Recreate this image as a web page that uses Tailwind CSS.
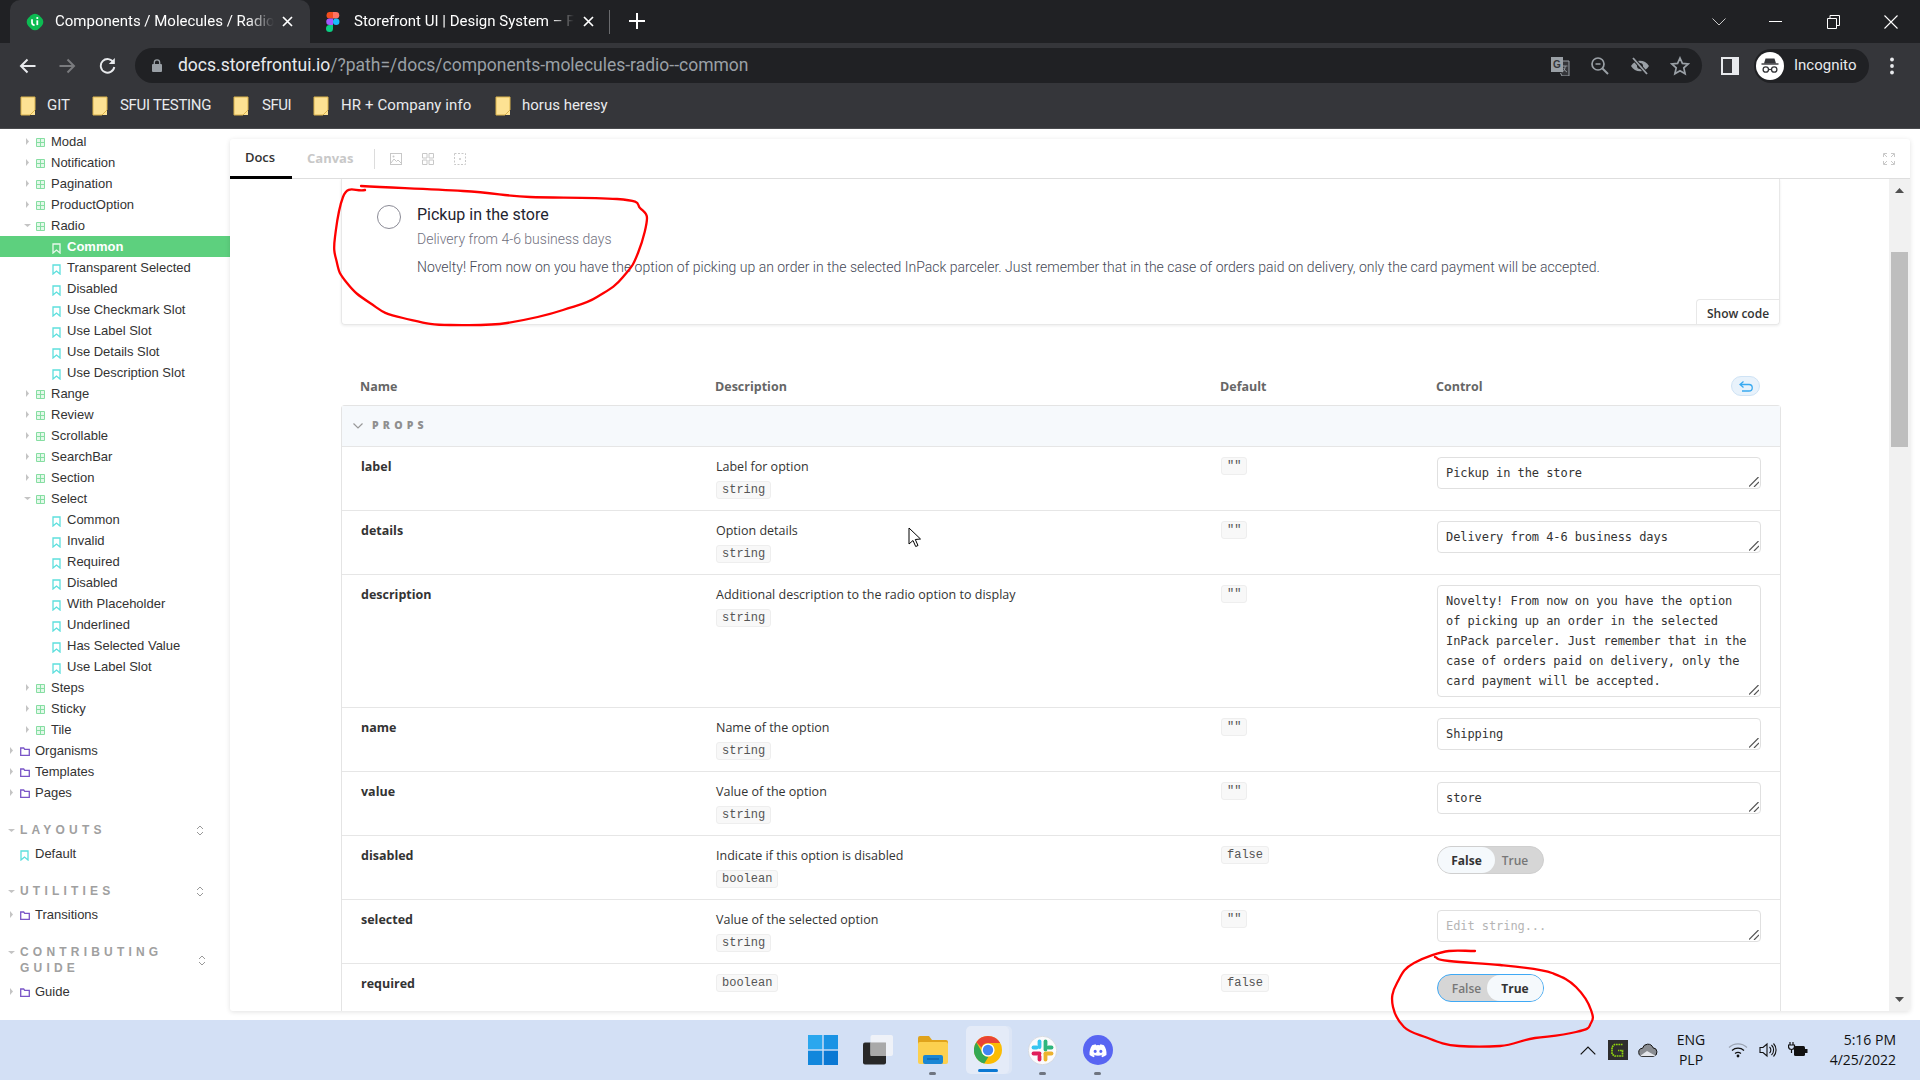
<!DOCTYPE html>
<html lang="en">
<head>
<meta charset="utf-8">
<title>Storefront UI docs</title>
<script src="https://cdn.jsdelivr.net/npm/@tailwindcss/browser@4"></script>
</head>
<body class="m-0 bg-white">
<svg class="hidden" width="0" height="0">
  <symbol id="g" viewBox="0 0 9 9"><path d="M.5.500h8v8h-8zM4.500.5v8M.5 4.500h8" fill="#e4f8ea" stroke="#86dea2" stroke-width="1"/></symbol>
  <symbol id="b" viewBox="0 0 9 11"><path d="M1 1h7v9L4.500 7 1 10z" fill="none" stroke="#5ddfdd" stroke-width="1.300"/></symbol>
  <symbol id="bw" viewBox="0 0 9 11"><path d="M1 1h7v9L4.500 7 1 10z" fill="none" stroke="#e8f8ec" stroke-width="1.300"/></symbol>
  <symbol id="f" viewBox="0 0 10 9"><path d="M.7 1h3l1 1.300h4.600v6H.7z" fill="none" stroke="#7a55c7" stroke-width="1.300"/></symbol>
  <symbol id="c" viewBox="0 0 5 7"><path d="M1 0l3 3.500L1 7z" fill="#c4c4c4"/></symbol>
  <symbol id="d" viewBox="0 0 7 5"><path d="M0 1h7L3.500 4z" fill="#c4c4c4"/></symbol>
  <symbol id="fol" viewBox="0 0 16 20"><path d="M1 1h14v18H1z" fill="#fde293"/><path d="M1 1h14v13l-5 5H1z" fill="#fde293" stroke="#d9b24c" stroke-width="1"/></symbol>
  <symbol id="grip" viewBox="0 0 10 10"><path d="M0 9.500L9.500 0M5 10L10 5" stroke="#555" stroke-width="1.200" fill="none"/></symbol>
  <symbol id="ud" viewBox="0 0 8 11"><path d="M1 4l3-3 3 3M1 7l3 3 3-3" stroke="#999" stroke-width="1" fill="none"/></symbol>
</svg>

<div class="flex h-[1080px] w-[1920px] flex-col overflow-hidden font-['Roboto',sans-serif]">

  <!-- tab strip -->
  <div class="flex h-[43px] shrink-0 bg-[#202124] text-white">
    <div class="ml-[10px] flex h-[43px] w-[300px] items-center rounded-t-[10px] bg-[#35363a] pl-[15px]">
      <svg width="20" height="20" viewBox="0 0 20 20"><rect x="2.500" y="2.500" width="15" height="15" rx="5.500" fill="#0cbb52" transform="rotate(45 10 10)"/><path d="M7 7.300v3.200a2.600 2.600 0 0 0 2.600 2.600" stroke="#fff" stroke-width="1.700" fill="none"/><path d="M12.300 8.300v4.800" stroke="#fff" stroke-width="1.800"/><circle cx="12.300" cy="6" r="1.100" fill="#fff"/></svg>
      <span class="ml-[10px] w-[219px] overflow-hidden whitespace-nowrap text-[15px] [mask-image:linear-gradient(to_right,black_88%,transparent)]">Components / Molecules / Radio</span>
      <svg class="ml-[8px]" width="11" height="11" viewBox="0 0 11 11"><path d="M1 1l9 9M10 1l-9 9" stroke="#fff" stroke-width="1.700"/></svg>
    </div>
    <div class="flex h-[43px] w-[299px] items-center pl-[16px]">
      <svg width="14" height="20" viewBox="0 0 14 20"><path d="M4 0h3v6.500H3.500a3.250 3.250 0 0 1 .5-6.500z" fill="#f24e1e"/><path d="M7 0h3a3.250 3.250 0 0 1 0 6.500H7z" fill="#ff7262"/><path d="M3.500 6.500H7V13H3.500a3.250 3.250 0 0 1 0-6.500z" fill="#a259ff"/><circle cx="10.200" cy="9.750" r="3.250" fill="#1abcfe"/><path d="M3.500 13H7v3.500a3.500 3.500 0 1 1-3.500-3.500z" fill="#0acf83"/></svg>
      <span class="ml-[14px] w-[220px] overflow-hidden whitespace-nowrap text-[15px] [mask-image:linear-gradient(to_right,black_90%,transparent)]">Storefront UI | Design System – Figma</span>
      <svg class="ml-[9px]" width="11" height="11" viewBox="0 0 11 11"><path d="M1 1l9 9M10 1l-9 9" stroke="#fff" stroke-width="1.700"/></svg>
    </div>
    <div class="mt-[10px] h-[24px] w-px bg-[#6a6b6e]"></div>
    <svg class="ml-[19px] mt-[13px]" width="16" height="16" viewBox="0 0 16 16"><path d="M8 0v16M0 8h16" stroke="#fff" stroke-width="2"/></svg>
    <div class="ml-auto flex h-[43px] items-center">
      <svg width="14" height="8" viewBox="0 0 14 8" class="mr-[43px]"><path d="M.5.500L7 7 13.500.5" stroke="#c8c8c8" stroke-width="1" fill="none"/></svg>
      <div class="mr-[45px] h-px w-[13px] bg-white"></div>
      <svg width="13" height="14" viewBox="0 0 13 14" class="mr-[44px]"><path d="M.5 3.500h9v10h-9zM3 3.500V.5h9.500v10H9.500" stroke="#fff" stroke-width="1" fill="none"/></svg>
      <svg width="14" height="14" viewBox="0 0 14 14" class="mr-[22px]"><path d="M.5.500l13 13M13.500.5l-13 13" stroke="#fff" stroke-width="1.100"/></svg>
    </div>
  </div>

  <!-- toolbar -->
  <div class="flex h-[43px] shrink-0 items-center bg-[#35363a] pt-[2px] text-white">
    <svg class="ml-[19px]" width="17" height="16" viewBox="0 0 17 16"><path d="M16.500 8H2M8.500 1.500L2 8l6.500 6.500" stroke="#e8eaed" stroke-width="2" fill="none"/></svg>
    <svg class="ml-[23px]" width="17" height="16" viewBox="0 0 17 16"><path d="M.5 8H15M8.500 1.500L15 8l-6.500 6.500" stroke="#7a7b7e" stroke-width="2" fill="none"/></svg>
    <svg class="ml-[23px]" width="17" height="17" viewBox="0 0 17 17"><path d="M14.500 5.500A6.800 6.800 0 1 0 15.300 10" stroke="#e8eaed" stroke-width="1.900" fill="none"/><path d="M15.800 1v6h-6z" fill="#e8eaed"/></svg>
    <div class="ml-[19px] flex h-[35px] w-[1567px] items-center rounded-full bg-[#202124] pl-[17px]">
      <svg width="10" height="13" viewBox="0 0 10 13"><rect y="5" width="10" height="8" rx="1" fill="#9aa0a6"/><path d="M2.300 5.500V3.500a2.700 2.700 0 0 1 5.400 0v2" stroke="#9aa0a6" stroke-width="1.300" fill="none"/></svg>
      <span class="ml-[16px] whitespace-nowrap text-[17.500px] leading-none"><span class="text-[#e8eaed]">docs.storefrontui.io</span><span class="text-[#9aa0a6]">/?path=/docs/components-molecules-radio--common</span></span>
      <div class="ml-auto mr-[12px] flex items-center gap-[20px]">
        <svg width="20" height="20" viewBox="0 0 20 20"><path d="M9 5h10v15h-7l-1.500-3" fill="#35363a" stroke="#9aa0a6" stroke-width="1"/><rect x="1" y="1" width="12" height="15" fill="#9aa0a6"/><text x="3" y="12" font-size="10" font-weight="700" font-family="Liberation Sans" fill="#35363a">G</text><path d="M13 10h4.500M15.200 10c0 3-1.300 5-2.700 6M13.800 12c.5 2 1.700 3 3.200 4" stroke="#9aa0a6" stroke-width=".9" fill="none"/></svg>
        <svg width="20" height="20" viewBox="0 0 20 20"><circle cx="8" cy="8" r="6" fill="none" stroke="#9aa0a6" stroke-width="1.700"/><path d="M12.500 12.500L18 18" stroke="#9aa0a6" stroke-width="2"/><path d="M5.500 8h5" stroke="#9aa0a6" stroke-width="1.500"/></svg>
        <svg width="20" height="20" viewBox="0 0 20 20"><path d="M1 10c4-7 14-7 18 0-4 7-14 7-18 0z" fill="#9aa0a6"/><circle cx="10" cy="10" r="3" fill="#202124"/><path d="M3 2l14 16" stroke="#202124" stroke-width="3.500"/><path d="M3 2l14 16" stroke="#9aa0a6" stroke-width="1.800"/></svg>
        <svg width="20" height="20" viewBox="0 0 20 20"><path d="M10 2l2.400 5.400 5.800.6-4.400 3.900 1.300 5.800-5.100-3-5.100 3 1.300-5.800L1.800 8l5.800-.6z" fill="none" stroke="#9aa0a6" stroke-width="1.700"/></svg>
      </div>
    </div>
    <svg class="ml-[19px]" width="18" height="18" viewBox="0 0 18 18"><rect width="18" height="18" fill="#e8eaed"/><rect x="2" y="2" width="9" height="14" fill="#35363a"/></svg>
    <div class="ml-[15px] flex h-[34px] w-[115px] items-center rounded-full bg-[#202124] pl-[2px]">
      <svg width="28" height="28" viewBox="0 0 28 28"><circle cx="14" cy="14" r="14" fill="#fff"/><path d="M9.500 6.500h9l1.500 5h-12z" fill="#35363a"/><path d="M5.500 12h17" stroke="#35363a" stroke-width="1.400"/><circle cx="9.800" cy="17.500" r="2.700" fill="none" stroke="#35363a" stroke-width="1.300"/><circle cx="18.200" cy="17.500" r="2.700" fill="none" stroke="#35363a" stroke-width="1.300"/><path d="M12.500 17.500h3" stroke="#35363a" stroke-width="1.200"/></svg>
      <span class="ml-[10px] text-[15px] text-[#e8eaed]">Incognito</span>
    </div>
    <svg class="ml-[21px]" width="4" height="18" viewBox="0 0 4 18"><circle cx="2" cy="2.500" r="1.900" fill="#e8eaed"/><circle cx="2" cy="9" r="1.900" fill="#e8eaed"/><circle cx="2" cy="15.500" r="1.900" fill="#e8eaed"/></svg>
  </div>

  <!-- bookmarks -->
  <div class="flex h-[43px] shrink-0 items-center border-b border-[#4a4b4e] bg-[#35363a] pb-[3px] text-[15px] text-[#e8eaed]">
    <svg class="ml-[20px]" width="16" height="20"><use href="#fol"/></svg><span class="ml-[11px] w-[34px]">GIT</span>
    <svg class="ml-[11px]" width="16" height="20"><use href="#fol"/></svg><span class="ml-[12px] w-[113px] whitespace-nowrap tracking-[-0.3px]">SFUI TESTING</span>
    <svg width="16" height="20"><use href="#fol"/></svg><span class="ml-[13px] w-[51px] tracking-[-0.5px]">SFUI</span>
    <svg width="16" height="20"><use href="#fol"/></svg><span class="ml-[12px] w-[154px] whitespace-nowrap tracking-[0.1px]">HR + Company info</span>
    <svg width="16" height="20"><use href="#fol"/></svg><span class="ml-[11px] whitespace-nowrap">horus heresy</span>
  </div>

  <!-- page -->
  <div class="flex min-h-0 flex-1 bg-white">
    <!-- sidebar -->
    <nav class="w-[230px] shrink-0 pt-[2px] font-['Liberation_Sans',sans-serif] text-[13px] text-[#333]">
      <div class="flex h-[21px] items-center pl-[25px]"><svg class="mr-[6px]" width="5" height="7"><use href="#c"/></svg><svg class="mr-[6px] mt-[2px]" width="9" height="9"><use href="#g"/></svg>Modal</div>
      <div class="flex h-[21px] items-center pl-[25px]"><svg class="mr-[6px]" width="5" height="7"><use href="#c"/></svg><svg class="mr-[6px] mt-[2px]" width="9" height="9"><use href="#g"/></svg>Notification</div>
      <div class="flex h-[21px] items-center pl-[25px]"><svg class="mr-[6px]" width="5" height="7"><use href="#c"/></svg><svg class="mr-[6px] mt-[2px]" width="9" height="9"><use href="#g"/></svg>Pagination</div>
      <div class="flex h-[21px] items-center pl-[25px]"><svg class="mr-[6px]" width="5" height="7"><use href="#c"/></svg><svg class="mr-[6px] mt-[2px]" width="9" height="9"><use href="#g"/></svg>ProductOption</div>
      <div class="flex h-[21px] items-center pl-[24px]"><svg class="mr-[5px]" width="7" height="5"><use href="#d"/></svg><svg class="mr-[6px] mt-[2px]" width="9" height="9"><use href="#g"/></svg>Radio</div>
      <div class="flex h-[21px] items-center bg-[#5dd07e] pl-[52px] font-bold text-white"><svg class="mr-[6px] mt-[3px]" width="9" height="11"><use href="#bw"/></svg>Common</div>
      <div class="flex h-[21px] items-center pl-[52px]"><svg class="mr-[6px] mt-[3px]" width="9" height="11"><use href="#b"/></svg>Transparent Selected</div>
      <div class="flex h-[21px] items-center pl-[52px]"><svg class="mr-[6px] mt-[3px]" width="9" height="11"><use href="#b"/></svg>Disabled</div>
      <div class="flex h-[21px] items-center pl-[52px]"><svg class="mr-[6px] mt-[3px]" width="9" height="11"><use href="#b"/></svg>Use Checkmark Slot</div>
      <div class="flex h-[21px] items-center pl-[52px]"><svg class="mr-[6px] mt-[3px]" width="9" height="11"><use href="#b"/></svg>Use Label Slot</div>
      <div class="flex h-[21px] items-center pl-[52px]"><svg class="mr-[6px] mt-[3px]" width="9" height="11"><use href="#b"/></svg>Use Details Slot</div>
      <div class="flex h-[21px] items-center pl-[52px]"><svg class="mr-[6px] mt-[3px]" width="9" height="11"><use href="#b"/></svg>Use Description Slot</div>
      <div class="flex h-[21px] items-center pl-[25px]"><svg class="mr-[6px]" width="5" height="7"><use href="#c"/></svg><svg class="mr-[6px] mt-[2px]" width="9" height="9"><use href="#g"/></svg>Range</div>
      <div class="flex h-[21px] items-center pl-[25px]"><svg class="mr-[6px]" width="5" height="7"><use href="#c"/></svg><svg class="mr-[6px] mt-[2px]" width="9" height="9"><use href="#g"/></svg>Review</div>
      <div class="flex h-[21px] items-center pl-[25px]"><svg class="mr-[6px]" width="5" height="7"><use href="#c"/></svg><svg class="mr-[6px] mt-[2px]" width="9" height="9"><use href="#g"/></svg>Scrollable</div>
      <div class="flex h-[21px] items-center pl-[25px]"><svg class="mr-[6px]" width="5" height="7"><use href="#c"/></svg><svg class="mr-[6px] mt-[2px]" width="9" height="9"><use href="#g"/></svg>SearchBar</div>
      <div class="flex h-[21px] items-center pl-[25px]"><svg class="mr-[6px]" width="5" height="7"><use href="#c"/></svg><svg class="mr-[6px] mt-[2px]" width="9" height="9"><use href="#g"/></svg>Section</div>
      <div class="flex h-[21px] items-center pl-[24px]"><svg class="mr-[5px]" width="7" height="5"><use href="#d"/></svg><svg class="mr-[6px] mt-[2px]" width="9" height="9"><use href="#g"/></svg>Select</div>
      <div class="flex h-[21px] items-center pl-[52px]"><svg class="mr-[6px] mt-[3px]" width="9" height="11"><use href="#b"/></svg>Common</div>
      <div class="flex h-[21px] items-center pl-[52px]"><svg class="mr-[6px] mt-[3px]" width="9" height="11"><use href="#b"/></svg>Invalid</div>
      <div class="flex h-[21px] items-center pl-[52px]"><svg class="mr-[6px] mt-[3px]" width="9" height="11"><use href="#b"/></svg>Required</div>
      <div class="flex h-[21px] items-center pl-[52px]"><svg class="mr-[6px] mt-[3px]" width="9" height="11"><use href="#b"/></svg>Disabled</div>
      <div class="flex h-[21px] items-center pl-[52px]"><svg class="mr-[6px] mt-[3px]" width="9" height="11"><use href="#b"/></svg>With Placeholder</div>
      <div class="flex h-[21px] items-center pl-[52px]"><svg class="mr-[6px] mt-[3px]" width="9" height="11"><use href="#b"/></svg>Underlined</div>
      <div class="flex h-[21px] items-center pl-[52px]"><svg class="mr-[6px] mt-[3px]" width="9" height="11"><use href="#b"/></svg>Has Selected Value</div>
      <div class="flex h-[21px] items-center pl-[52px]"><svg class="mr-[6px] mt-[3px]" width="9" height="11"><use href="#b"/></svg>Use Label Slot</div>
      <div class="flex h-[21px] items-center pl-[25px]"><svg class="mr-[6px]" width="5" height="7"><use href="#c"/></svg><svg class="mr-[6px] mt-[2px]" width="9" height="9"><use href="#g"/></svg>Steps</div>
      <div class="flex h-[21px] items-center pl-[25px]"><svg class="mr-[6px]" width="5" height="7"><use href="#c"/></svg><svg class="mr-[6px] mt-[2px]" width="9" height="9"><use href="#g"/></svg>Sticky</div>
      <div class="flex h-[21px] items-center pl-[25px]"><svg class="mr-[6px]" width="5" height="7"><use href="#c"/></svg><svg class="mr-[6px] mt-[2px]" width="9" height="9"><use href="#g"/></svg>Tile</div>
      <div class="flex h-[21px] items-center pl-[9px]"><svg class="mr-[6px]" width="5" height="7"><use href="#c"/></svg><svg class="mr-[5px] mt-[2px]" width="10" height="9"><use href="#f"/></svg>Organisms</div>
      <div class="flex h-[21px] items-center pl-[9px]"><svg class="mr-[6px]" width="5" height="7"><use href="#c"/></svg><svg class="mr-[5px] mt-[2px]" width="10" height="9"><use href="#f"/></svg>Templates</div>
      <div class="flex h-[21px] items-center pl-[9px]"><svg class="mr-[6px]" width="5" height="7"><use href="#c"/></svg><svg class="mr-[5px] mt-[2px]" width="10" height="9"><use href="#f"/></svg>Pages</div>

      <div class="mt-[17px] flex h-[20px] items-center pl-[8px] text-[12px] font-black tracking-[0.35em] text-[#a0a0a0]"><svg class="mr-[5px]" width="7" height="5"><use href="#d"/></svg><span class="w-[176px]">LAYOUTS</span><svg width="8" height="11"><use href="#ud"/></svg></div>
      <div class="mt-[3px] flex h-[21px] items-center pl-[20px]"><svg class="mr-[6px] mt-[3px]" width="9" height="11"><use href="#b"/></svg>Default</div>
      <div class="mt-[17px] flex h-[20px] items-center pl-[8px] text-[12px] font-black tracking-[0.35em] text-[#a0a0a0]"><svg class="mr-[5px]" width="7" height="5"><use href="#d"/></svg><span class="w-[176px]">UTILITIES</span><svg width="8" height="11"><use href="#ud"/></svg></div>
      <div class="mt-[3px] flex h-[21px] items-center pl-[9px]"><svg class="mr-[6px]" width="5" height="7"><use href="#c"/></svg><svg class="mr-[5px] mt-[2px]" width="10" height="9"><use href="#f"/></svg>Transitions</div>
      <div class="mt-[19px] flex h-[32px] items-center pl-[8px] text-[12px] font-black leading-[16px] tracking-[0.35em] text-[#a0a0a0]"><svg class="mb-[16px] mr-[5px]" width="7" height="5"><use href="#d"/></svg><span class="w-[178px]">CONTRIBUTING<br>GUIDE</span><svg width="8" height="11"><use href="#ud"/></svg></div>
      <div class="mt-[5px] flex h-[21px] items-center pl-[9px]"><svg class="mr-[6px]" width="5" height="7"><use href="#c"/></svg><svg class="mr-[5px] mt-[2px]" width="10" height="9"><use href="#f"/></svg>Guide</div>
    </nav>

    <!-- main panel -->
    <main class="mb-[9px] mt-[10px] flex h-[872px] w-[1680px] flex-col overflow-hidden rounded-[3px] bg-white shadow-[0_1px_5px_rgba(0,0,0,0.12)]">
      <div class="flex h-[40px] shrink-0 items-center border-b border-[#dedede] font-['Open_Sans',sans-serif] text-[13px]">
        <div class="flex h-[40px] w-[62px] items-center justify-center border-b-[3px] border-black pt-[2px] pr-[2px] font-semibold text-[#333]">Docs</div>
        <div class="ml-[15px] font-bold text-[#c8c8c8]">Canvas</div>
        <div class="ml-[21px] h-[20px] w-px bg-[#dcdcdc]"></div>
        <svg class="ml-[15px]" width="12" height="12" viewBox="0 0 12 12"><rect x=".5" y=".5" width="11" height="11" fill="none" stroke="#c8c8c8"/><path d="M1 10l3-4 2.500 2.500L8 7l3 3" fill="none" stroke="#c8c8c8"/><circle cx="3.500" cy="3.500" r="1" fill="#c8c8c8"/></svg>
        <svg class="ml-[20px]" width="12" height="12" viewBox="0 0 12 12"><path d="M.5.500h4.500v4.500H.5zM7 .5h4.500v4.500H7zM.5 7h4.500v4.500H.5zM7 7h4.500v4.500H7z" fill="none" stroke="#c8c8c8"/></svg>
        <svg class="ml-[20px]" width="12" height="12" viewBox="0 0 12 12"><rect x=".5" y=".5" width="11" height="11" fill="none" stroke="#c8c8c8" stroke-dasharray="2 1.500"/><circle cx="6" cy="6" r="1" fill="#c8c8c8"/></svg>
        <svg class="ml-auto mr-[15px]" width="12" height="12" viewBox="0 0 12 12"><path d="M.5 4V.5H4M8 .5h3.500V4M11.500 8v3.500H8M4 11.500H.5V8M1 1l3 3M11 1L8 4M11 11L8 8M1 11l3-3" fill="none" stroke="#c8c8c8"/></svg>
      </div>
      <div class="flex min-h-0 flex-1">
        <div class="w-[1659px] overflow-hidden pl-[111px]">
          <!-- story card -->
          <section class="flex h-[146px] w-[1439px] flex-col rounded-b-[4px] border-x border-b border-[#e8e8e8] font-['Roboto',sans-serif] shadow-[0_1px_3px_rgba(0,0,0,0.08)]">
            <div class="flex pl-[35px] pt-[24px]">
              <div class="mt-[2px] h-[24px] w-[24px] rounded-full border border-[#8b8b96]"></div>
              <div class="ml-[16px]">
                <div class="h-[24px] text-[16px] leading-[24px] text-[#1f2430]">Pickup in the store</div>
                <div class="mt-[2px] h-[20px] text-[14px] font-light leading-[20px] text-[#70707e]">Delivery from 4-6 business days</div>
                <div class="mt-[8px] h-[20px] whitespace-nowrap text-[14px] font-light leading-[20px] text-[#454856]">Novelty! From now on you have the option of picking up an order in the selected InPack parceler. Just remember that in the case of orders paid on delivery, only the card payment will be accepted.</div>
              </div>
            </div>
            <div class="ml-auto mt-auto flex h-[25px] w-[83px] items-center justify-center rounded-tl-[4px] border-l border-t border-[#e8e8e8] pt-[3px] font-['Open_Sans',sans-serif] text-[12px] font-semibold text-[#333]">Show code</div>
          </section>

          <!-- args table -->
          <div class="mt-[51px] flex h-[20px] w-[1419px] items-center pl-[19px] font-['Open_Sans',sans-serif] text-[12.500px] font-bold text-[#666]">
            <div class="mt-[2px] w-[355px]">Name</div><div class="mt-[2px] w-[505px]">Description</div><div class="mt-[2px] w-[216px]">Default</div><div class="mt-[2px]">Control</div>
            <div class="ml-auto flex h-[20px] w-[29px] items-center justify-center rounded-full border border-[#cfe3f5] bg-[#e8f2fb]"><svg width="14" height="11" viewBox="0 0 14 11"><path d="M4.500.5L1 3.500l3.500 3M1 3.500h9a3 3 0 0 1 0 6.500H3" fill="none" stroke="#38a9f0" stroke-width="1.300"/></svg></div>
          </div>
          <div class="mt-[9px] w-[1440px] rounded-t-[4px] border-x border-t border-[#e4e4e4] font-['Open_Sans',sans-serif] text-[12.500px] text-[#333]">
            <div class="flex h-[40px] items-center bg-[#f6f9fc] pl-[11px] text-[10.500px] font-extrabold tracking-[0.4em] text-[#8f8f8f]"><svg class="mr-[9px]" width="10" height="6" viewBox="0 0 10 6"><path d="M.5.500L5 5 9.500.5" fill="none" stroke="#999" stroke-width="1.200"/></svg>PROPS</div>

            <div class="flex h-[64px] border-t border-[#e6e6e6] pl-[19px] pt-[10px]">
              <div class="w-[355px] font-bold leading-[20px]">label</div>
              <div class="w-[505px] leading-[20px]">Label for option<div class="mt-[4px] flex"><code class="h-[18px] rounded-[3px] border border-[#eee] bg-[#f8f8f8] px-[5px] font-['Liberation_Mono',monospace] text-[12px] leading-[16px] text-[#555]">string</code></div></div>
              <div class="w-[216px]"><code class="flex h-[18px] w-fit rounded-[3px] border border-[#eee] bg-[#f8f8f8] px-[5px] font-['Liberation_Mono',monospace] text-[12px] leading-[16px] text-[#555]">""</code></div>
              <div class="relative h-[32px] w-[324px] rounded-[4px] border border-[#e0e0e0] pl-[8px] pt-[5px] font-['DejaVu_Sans_Mono',monospace] text-[12px] leading-[20px] tracking-[-0.07px] text-[#333]">Pickup in the store<svg class="absolute bottom-[1px] right-[1px]" width="10" height="10"><use href="#grip"/></svg></div>
            </div>
            <div class="flex h-[64px] border-t border-[#e6e6e6] pl-[19px] pt-[10px]">
              <div class="w-[355px] font-bold leading-[20px]">details</div>
              <div class="w-[505px] leading-[20px]">Option details<div class="mt-[4px] flex"><code class="h-[18px] rounded-[3px] border border-[#eee] bg-[#f8f8f8] px-[5px] font-['Liberation_Mono',monospace] text-[12px] leading-[16px] text-[#555]">string</code></div></div>
              <div class="w-[216px]"><code class="flex h-[18px] w-fit rounded-[3px] border border-[#eee] bg-[#f8f8f8] px-[5px] font-['Liberation_Mono',monospace] text-[12px] leading-[16px] text-[#555]">""</code></div>
              <div class="relative h-[32px] w-[324px] rounded-[4px] border border-[#e0e0e0] pl-[8px] pt-[5px] font-['DejaVu_Sans_Mono',monospace] text-[12px] leading-[20px] tracking-[-0.07px] text-[#333]">Delivery from 4-6 business days<svg class="absolute bottom-[1px] right-[1px]" width="10" height="10"><use href="#grip"/></svg></div>
            </div>
            <div class="flex h-[133px] border-t border-[#e6e6e6] pl-[19px] pt-[10px]">
              <div class="w-[355px] font-bold leading-[20px]">description</div>
              <div class="w-[505px] leading-[20px]">Additional description to the radio option to display<div class="mt-[4px] flex"><code class="h-[18px] rounded-[3px] border border-[#eee] bg-[#f8f8f8] px-[5px] font-['Liberation_Mono',monospace] text-[12px] leading-[16px] text-[#555]">string</code></div></div>
              <div class="w-[216px]"><code class="flex h-[18px] w-fit rounded-[3px] border border-[#eee] bg-[#f8f8f8] px-[5px] font-['Liberation_Mono',monospace] text-[12px] leading-[16px] text-[#555]">""</code></div>
              <div class="relative h-[112px] w-[324px] whitespace-nowrap rounded-[4px] border border-[#e0e0e0] pl-[8px] pt-[5px] font-['DejaVu_Sans_Mono',monospace] text-[12px] leading-[20px] tracking-[-0.07px] text-[#333]">Novelty! From now on you have the option<br>of picking up an order in the selected<br>InPack parceler. Just remember that in the<br>case of orders paid on delivery, only the<br>card payment will be accepted.<svg class="absolute bottom-[1px] right-[1px]" width="10" height="10"><use href="#grip"/></svg></div>
            </div>
            <div class="flex h-[64px] border-t border-[#e6e6e6] pl-[19px] pt-[10px]">
              <div class="w-[355px] font-bold leading-[20px]">name</div>
              <div class="w-[505px] leading-[20px]">Name of the option<div class="mt-[4px] flex"><code class="h-[18px] rounded-[3px] border border-[#eee] bg-[#f8f8f8] px-[5px] font-['Liberation_Mono',monospace] text-[12px] leading-[16px] text-[#555]">string</code></div></div>
              <div class="w-[216px]"><code class="flex h-[18px] w-fit rounded-[3px] border border-[#eee] bg-[#f8f8f8] px-[5px] font-['Liberation_Mono',monospace] text-[12px] leading-[16px] text-[#555]">""</code></div>
              <div class="relative h-[32px] w-[324px] rounded-[4px] border border-[#e0e0e0] pl-[8px] pt-[5px] font-['DejaVu_Sans_Mono',monospace] text-[12px] leading-[20px] tracking-[-0.07px] text-[#333]">Shipping<svg class="absolute bottom-[1px] right-[1px]" width="10" height="10"><use href="#grip"/></svg></div>
            </div>
            <div class="flex h-[64px] border-t border-[#e6e6e6] pl-[19px] pt-[10px]">
              <div class="w-[355px] font-bold leading-[20px]">value</div>
              <div class="w-[505px] leading-[20px]">Value of the option<div class="mt-[4px] flex"><code class="h-[18px] rounded-[3px] border border-[#eee] bg-[#f8f8f8] px-[5px] font-['Liberation_Mono',monospace] text-[12px] leading-[16px] text-[#555]">string</code></div></div>
              <div class="w-[216px]"><code class="flex h-[18px] w-fit rounded-[3px] border border-[#eee] bg-[#f8f8f8] px-[5px] font-['Liberation_Mono',monospace] text-[12px] leading-[16px] text-[#555]">""</code></div>
              <div class="relative h-[32px] w-[324px] rounded-[4px] border border-[#e0e0e0] pl-[8px] pt-[5px] font-['DejaVu_Sans_Mono',monospace] text-[12px] leading-[20px] tracking-[-0.07px] text-[#333]">store<svg class="absolute bottom-[1px] right-[1px]" width="10" height="10"><use href="#grip"/></svg></div>
            </div>
            <div class="flex h-[64px] border-t border-[#e6e6e6] pl-[19px] pt-[10px]">
              <div class="w-[355px] font-bold leading-[20px]">disabled</div>
              <div class="w-[505px] leading-[20px]">Indicate if this option is disabled<div class="mt-[4px] flex"><code class="h-[18px] rounded-[3px] border border-[#eee] bg-[#f8f8f8] px-[5px] font-['Liberation_Mono',monospace] text-[12px] leading-[16px] text-[#555]">boolean</code></div></div>
              <div class="w-[216px]"><code class="flex h-[18px] w-fit rounded-[3px] border border-[#eee] bg-[#f8f8f8] px-[5px] font-['Liberation_Mono',monospace] text-[12px] leading-[16px] text-[#555]">false</code></div>
              <div class="flex h-[28px] w-[107px] rounded-full border border-[#cfcfcf] bg-[#d6d6d6] text-[12px] leading-[27px]">
                <div class="w-[57px] rounded-full bg-[#f5f9fc] text-center font-bold text-[#333]">False</div><div class="relative ml-[-8px] w-[56px] text-center font-semibold text-[#777]">True</div>
              </div>
            </div>
            <div class="flex h-[64px] border-t border-[#e6e6e6] pl-[19px] pt-[10px]">
              <div class="w-[355px] font-bold leading-[20px]">selected</div>
              <div class="w-[505px] leading-[20px]">Value of the selected option<div class="mt-[4px] flex"><code class="h-[18px] rounded-[3px] border border-[#eee] bg-[#f8f8f8] px-[5px] font-['Liberation_Mono',monospace] text-[12px] leading-[16px] text-[#555]">string</code></div></div>
              <div class="w-[216px]"><code class="flex h-[18px] w-fit rounded-[3px] border border-[#eee] bg-[#f8f8f8] px-[5px] font-['Liberation_Mono',monospace] text-[12px] leading-[16px] text-[#555]">""</code></div>
              <div class="relative h-[32px] w-[324px] rounded-[4px] border border-[#e0e0e0] pl-[8px] pt-[5px] font-['DejaVu_Sans_Mono',monospace] text-[12px] leading-[20px] tracking-[-0.07px] text-[#b5b5b5]">Edit string...<svg class="absolute bottom-[1px] right-[1px]" width="10" height="10"><use href="#grip"/></svg></div>
            </div>
            <div class="flex h-[64px] border-t border-[#e6e6e6] pl-[19px] pt-[10px]">
              <div class="w-[355px] font-bold leading-[20px]">required</div>
              <div class="w-[505px]"><code class="flex h-[18px] w-fit rounded-[3px] border border-[#eee] bg-[#f8f8f8] px-[5px] font-['Liberation_Mono',monospace] text-[12px] leading-[16px] text-[#555]">boolean</code></div>
              <div class="w-[216px]"><code class="flex h-[18px] w-fit rounded-[3px] border border-[#eee] bg-[#f8f8f8] px-[5px] font-['Liberation_Mono',monospace] text-[12px] leading-[16px] text-[#555]">false</code></div>
              <div class="flex h-[28px] w-[107px] rounded-full border border-[#3fa9f5] bg-[#d6d6d6] text-[12px] leading-[27px]">
                <div class="w-[57px] text-center font-semibold text-[#777]">False</div><div class="relative ml-[-8px] w-[56px] rounded-full bg-[#f5f9fc] text-center font-bold text-[#333]">True</div>
              </div>
            </div>
          </div>
        </div>
        <!-- scrollbar -->
        <div class="flex w-[21px] shrink-0 flex-col items-center bg-[#f1f1f1]">
          <svg class="mt-[9px]" width="9" height="5" viewBox="0 0 9 5"><path d="M4.500 0L9 5H0z" fill="#505050"/></svg>
          <div class="mt-[59px] h-[195px] w-[17px] bg-[#bebebe]"></div>
          <svg class="mb-[9px] mt-auto" width="9" height="5" viewBox="0 0 9 5"><path d="M0 0h9L4.500 5z" fill="#505050"/></svg>
        </div>
      </div>
    </main>
  </div>

  <!-- taskbar -->
  <footer class="flex h-[60px] shrink-0 items-center bg-[#d3e0f5] text-[#111]">
    <div class="w-[795px] shrink-0"></div>
    <div class="flex w-[330px] shrink-0 items-center">
      <div class="flex h-[48px] w-[55px] items-center justify-center">
        <svg width="30" height="30" viewBox="0 0 30 30"><rect width="14.300" height="14.300" fill="#2aa7ee"/><rect x="15.700" width="14.300" height="14.300" fill="#1a93e4"/><rect y="15.700" width="14.300" height="14.300" fill="#1287dc"/><rect x="15.700" y="15.700" width="14.300" height="14.300" fill="#0a78d3"/></svg>
      </div>
      <div class="flex h-[48px] w-[55px] items-center justify-center">
        <svg width="30" height="30" viewBox="0 0 30 30"><rect y="7.500" width="23" height="22" rx="2" fill="#282828"/><rect x="7.500" width="22.500" height="21" rx="2" fill="#f2f4f8" fill-opacity=".9"/><rect x="7.500" y="7.500" width="15.500" height="13.500" fill="#a9a9a9"/></svg>
      </div>
      <div class="relative flex h-[48px] w-[55px] items-center justify-center">
        <svg width="30" height="28" viewBox="0 0 30 28"><path d="M0 2a2 2 0 0 1 2-2h9l3 4h14a2 2 0 0 1 2 2v4H0z" fill="#e0a31c"/><rect y="6" width="30" height="22" rx="2" fill="#fcd04f"/><rect x="5" y="19" width="20" height="9" rx="2" fill="#1a86d4"/><path d="M9 23h12" stroke="#0d5fa6" stroke-width="1.200"/></svg>
        <div class="absolute bottom-[-1px] left-[24px] h-[3px] w-[7px] rounded-full bg-[#6f7580]"></div>
      </div>
      <div class="relative flex h-[48px] w-[55px] items-center justify-center">
        <div class="absolute left-[6px] top-0 h-[48px] w-[43px] rounded-[5px] bg-[#e4ebf8] shadow-[3px_0_0_#dde6f6]"></div>
        <svg class="relative" width="28" height="28" viewBox="0 0 28 28"><circle cx="14" cy="14" r="14" fill="#fbbc04"/><path d="M14 0a14 14 0 0 1 12.100 7H14a7 7 0 0 0-6.500 4.400L2.300 6.200A14 14 0 0 1 14 0z" fill="#ea4335"/><path d="M2.300 6.200l6.100 10.600a6.900 6.900 0 0 0 5.900 4.200L10.300 27.600A14 14 0 0 1 2.300 6.200z" fill="#34a853"/><circle cx="14" cy="14" r="6.600" fill="#fff"/><circle cx="14" cy="14" r="5.200" fill="#4285f4"/></svg>
        <div class="absolute bottom-[2px] left-[18px] h-[3px] w-[20px] rounded-full bg-[#0a78d3]"></div>
      </div>
      <div class="relative flex h-[48px] w-[55px] items-center justify-center">
        <svg width="29" height="29" viewBox="0 0 29 29"><circle cx="14.500" cy="14.500" r="14.200" fill="#fbfbfd" stroke="#c9ccd2" stroke-width=".6"/><g stroke-width="3.800" stroke-linecap="round"><path d="M11.500 5.500v5.500" stroke="#36c5f0"/><path d="M5.500 11.500h3" stroke="#36c5f0"/><path d="M17.500 5.500v8" stroke="#2eb67d"/><path d="M20.500 11.500h3" stroke="#2eb67d"/><path d="M17.500 23.500V18" stroke="#ecb22e"/><path d="M23.500 17.500h-6" stroke="#ecb22e"/><path d="M11.500 23.500v-3" stroke="#e01e5a"/><path d="M5.500 17.500h6" stroke="#e01e5a"/></g></svg>
        <div class="absolute bottom-[-1px] left-[24px] h-[3px] w-[7px] rounded-full bg-[#6f7580]"></div>
      </div>
      <div class="relative flex h-[48px] w-[55px] items-center justify-center">
        <svg width="30" height="30" viewBox="0 0 30 30"><circle cx="15" cy="15" r="15" fill="#5865f2"/><g transform="translate(6.500 7.200) scale(.71)"><path fill="#fff" d="M20.317 4.370a19.791 19.791 0 0 0-4.885-1.515.074.074 0 0 0-.079.037c-.21.375-.444.864-.608 1.250a18.270 18.270 0 0 0-5.487 0 12.640 12.640 0 0 0-.617-1.250.077.077 0 0 0-.079-.037A19.736 19.736 0 0 0 3.677 4.370a.070.070 0 0 0-.032.027C.533 9.046-.32 13.580.099 18.057a.082.082 0 0 0 .031.057 19.900 19.900 0 0 0 5.993 3.030.078.078 0 0 0 .084-.028c.462-.63.874-1.295 1.226-1.994a.076.076 0 0 0-.041-.106 13.107 13.107 0 0 1-1.872-.892.077.077 0 0 1-.008-.128 10.200 10.200 0 0 0 .372-.292.074.074 0 0 1 .077-.01c3.928 1.793 8.180 1.793 12.062 0a.074.074 0 0 1 .078.01c.12.098.246.198.373.292a.077.077 0 0 1-.006.127 12.299 12.299 0 0 1-1.873.892.077.077 0 0 0-.041.107c.36.698.772 1.362 1.225 1.993a.076.076 0 0 0 .084.028 19.839 19.839 0 0 0 6.002-3.030.077.077 0 0 0 .032-.054c.5-5.177-.838-9.674-3.549-13.660a.061.061 0 0 0-.031-.03zM8.020 15.330c-1.183 0-2.157-1.085-2.157-2.419 0-1.333.956-2.419 2.157-2.419 1.210 0 2.176 1.096 2.157 2.420 0 1.333-.956 2.418-2.157 2.418zm7.975 0c-1.183 0-2.157-1.085-2.157-2.419 0-1.333.955-2.419 2.157-2.419 1.210 0 2.176 1.096 2.157 2.420 0 1.333-.946 2.418-2.157 2.418z"/></g></svg>
        <div class="absolute bottom-[-1px] left-[24px] h-[3px] w-[7px] rounded-full bg-[#6f7580]"></div>
      </div>
    </div>
    <div class="flex w-[795px] shrink-0 items-center justify-end pr-[24px] font-['Open_Sans',sans-serif] text-[14px]">
      <svg width="16" height="9" viewBox="0 0 16 9"><path d="M.7 8.300L8 1l7.300 7.300" fill="none" stroke="#111" stroke-width="1.200"/></svg>
      <svg class="ml-[12px]" width="20" height="20" viewBox="0 0 20 20"><rect width="20" height="20" fill="#2e2e2e"/><path d="M14.500 4.500h-8L4 7v7l2.500 2h8v-5.500H10" fill="none" stroke="#8ed20f" stroke-width="1.700" stroke-dasharray="1.700 .7"/></svg>
      <svg class="ml-[10px]" width="20" height="14" viewBox="0 0 20 14"><path d="M5 13.300a4 4 0 0 1-.5-8A5.500 5.500 0 0 1 15 4.800a4.300 4.300 0 0 1 .5 8.500z" fill="#8a8d92" stroke="#111" stroke-width="1"/><path d="M2 13l7-5 9 5z" fill="#e4e6ea"/></svg>
      <div class="ml-[18px] w-[30px] text-center leading-[20px]">ENG<br>PLP</div>
      <svg class="ml-[22px]" width="20" height="16" viewBox="0 0 20 16"><path d="M1 5.500a13 13 0 0 1 18 0" fill="none" stroke="#9aa3b2" stroke-width="1.200"/><path d="M4 8.500a9 9 0 0 1 12 0M7 11.500a5 5 0 0 1 6 0" fill="none" stroke="#111" stroke-width="1.200"/><circle cx="10" cy="14" r="1.400" fill="#111"/></svg>
      <svg class="ml-[11px]" width="18" height="16" viewBox="0 0 18 16"><path d="M1 5.500h3L8 2v12l-4-3.500H1z" fill="none" stroke="#111" stroke-width="1.100"/><path d="M10.500 5a4 4 0 0 1 0 6M12.500 3a7 7 0 0 1 0 10M14.500 1.500a9.500 9.500 0 0 1 0 13" fill="none" stroke="#111" stroke-width="1.100"/></svg>
      <svg class="ml-[11px]" width="20" height="16" viewBox="0 0 20 16"><rect x="6" y="4" width="11" height="10" rx="1.500" fill="#111"/><rect x="17" y="7" width="2.500" height="4" fill="#111"/><path d="M2 0v3M5 0v3M.5 3h6v1.500a3 3 0 0 1-6 0zM3.500 7v4" stroke="#111" stroke-width="1.200" fill="none"/></svg>
      <div class="ml-[18px] w-[70px] whitespace-nowrap text-right leading-[20px]">5:16 PM<br>4/25/2022</div>
    </div>
  </footer>
</div>

<!-- cursor and red pen annotations, laid over the screenshot -->
<svg class="pointer-events-none absolute left-0 top-0" width="1920" height="1080" viewBox="0 0 1920 1080" fill="none">
  <path d="M361 186C400 188 430 189 463 191S505 196 530 197 590 197 617 199 636 204 640 208 647 213 647 218 644 238 638 253 632 266 623 277 608 290 597 297 578 305 563 310 525 320 507 323 470 325 450 325 425 323 403 318 382 311 370 303 355 293 347 283 339 272 337 263 333 252 335 237 338 210 343 197 355 192 365 190" stroke="#f00" stroke-width="2.300" stroke-linecap="round" stroke-linejoin="round"/>
  <path d="M1475 951C1465 951 1458 950 1449 951S1425 957 1414 963 1402 974 1397 983 1391 998 1393 1007 1398 1021 1404 1027 1418 1034 1428 1038 1445 1045 1459 1046 1485 1047 1500 1046 1520 1040 1535 1038 1560 1036 1576 1032 1588 1028 1591 1023 1593 1016 1591 1010 1584 995 1576 987 1562 977 1552 973 1520 967 1500 965 1465 963 1449 961 1440 959 1435 957" stroke="#f00" stroke-width="2.300" stroke-linecap="round" stroke-linejoin="round"/>
  <path d="M909 528v16l4-3.500 2.700 6 2.300-1-2.700-6 5.200-.5z" fill="#fff" stroke="#000" stroke-width="1"/>
</svg>
</body>
</html>
